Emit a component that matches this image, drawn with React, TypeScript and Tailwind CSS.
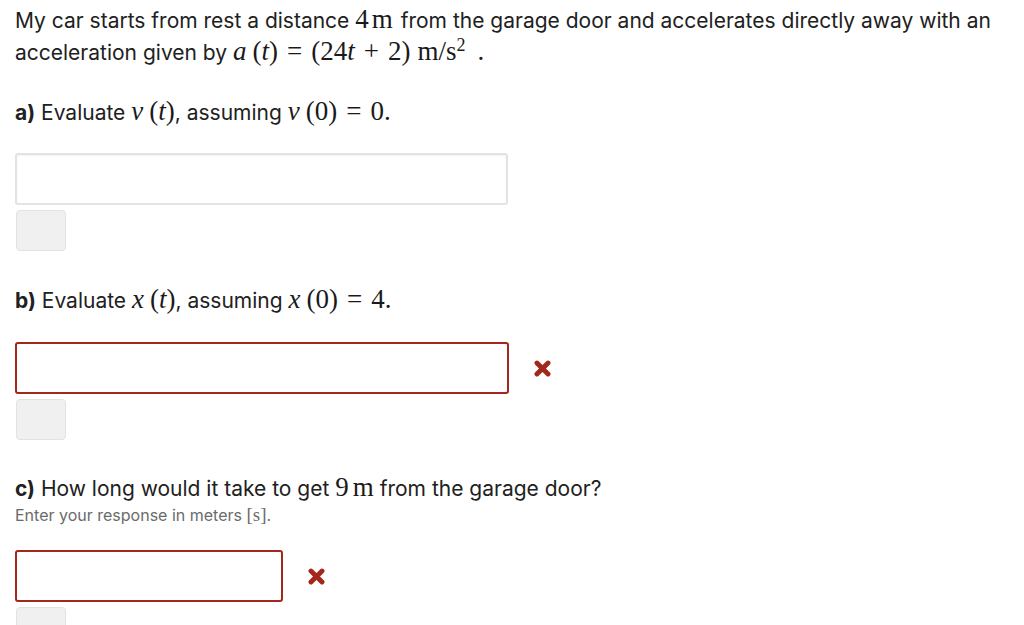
import type { ReactNode } from "react";

function M({ children }: { children: ReactNode }) {
  return (
    <span className="font-['Liberation_Serif',serif] text-[27px] leading-none text-[#1a1a1a]">
      {children}
    </span>
  );
}

function V({ children }: { children: ReactNode }) {
  return <span className="italic">{children}</span>;
}

// binary / relation operator with KaTeX-like spacing
function Op({ children }: { children: ReactNode }) {
  return <span className="mx-[9px]">{children}</span>;
}

function Cross() {
  return (
    <svg width="17" height="17" viewBox="0 0 16 16" className="shrink-0">
      <path d="M2.8 2.8 L13.2 13.2 M13.2 2.8 L2.8 13.2" stroke="#a3281c" strokeWidth="4.6" strokeLinecap="round" />
    </svg>
  );
}

function AnswerBox({ width, error }: { width: string; error?: boolean }) {
  return (
    <div>
      <div className="flex items-center gap-[25px]">
        <div
          className={
            error
              ? `${width} h-[52px] rounded-[3px] border-2 border-[#a3281c] bg-white`
              : `${width} h-[52px] rounded-[3px] border-2 border-[#e3e3e3] bg-white shadow-[inset_0_1px_2px_rgba(0,0,0,0.05)]`
          }
        />
        {error && <Cross />}
      </div>
      <div className="mt-[5px] ml-px h-[41px] w-[50px] rounded-[4px] border border-[#e2e2e2] bg-[#f0f0f0]" />
    </div>
  );
}

export default function App() {
  return (
    <main className="min-h-screen bg-white pl-[15px] pr-[10px] pt-[5px] font-['Inter',sans-serif] text-[21px] text-[#212121]">
      <p className="max-w-[995px] leading-[32px]">
        My car starts from rest a distance{" "}
        <M>
          4<span className="ml-[3px] mr-[2px]">m</span>
        </M>{" "}
        from the garage door and accelerates directly away with an acceleration given by{" "}
        <M>
          <V>a</V>
          <span className="ml-[6px]">(</span>
          <V>t</V>)<Op>=</Op>(24<V>t</V>
          <Op>+</Op>2)<span className="ml-[7px]">m/s</span>
          <sup className="text-[18px]">2</sup>
          <span className="ml-[12px]">.</span>
        </M>
      </p>

      <section className="mt-[28px]">
        <p className="leading-[32px]">
          <span className="font-bold">a)</span> Evaluate{" "}
          <M>
            <V>v</V>
            <span className="ml-[6px]">(</span>
            <V>t</V>)
          </M>
          , assuming{" "}
          <M>
            <V>v</V>
            <span className="ml-[6px]">(0)</span>
            <Op>=</Op>0.
          </M>
        </p>
        <div className="mt-[24px]">
          <AnswerBox width="w-[493px]" />
        </div>
      </section>

      <section className="mt-[34px]">
        <p className="leading-[32px]">
          <span className="font-bold">b)</span> Evaluate{" "}
          <M>
            <V>x</V>
            <span className="ml-[6px]">(</span>
            <V>t</V>)
          </M>
          , assuming{" "}
          <M>
            <V>x</V>
            <span className="ml-[6px]">(0)</span>
            <Op>=</Op>4.
          </M>
        </p>
        <div className="mt-[25px]">
          <AnswerBox width="w-[494px]" error />
        </div>
      </section>

      <section className="mt-[33px]">
        <p className="leading-[32px]">
          <span className="font-bold">c)</span> How long would it take to get{" "}
          <M>
            9<span className="ml-[4px]">m</span>
          </M>{" "}
          from the garage door?
        </p>
        <p className="text-[16px] leading-[20px] text-[#6b6b6b]">
          Enter your response in meters{" "}
          <span className="font-['Liberation_Serif',serif] text-[19px]">[s]</span>.
        </p>
        <div className="mt-[25px]">
          <AnswerBox width="w-[268px]" error />
        </div>
      </section>
    </main>
  );
}
